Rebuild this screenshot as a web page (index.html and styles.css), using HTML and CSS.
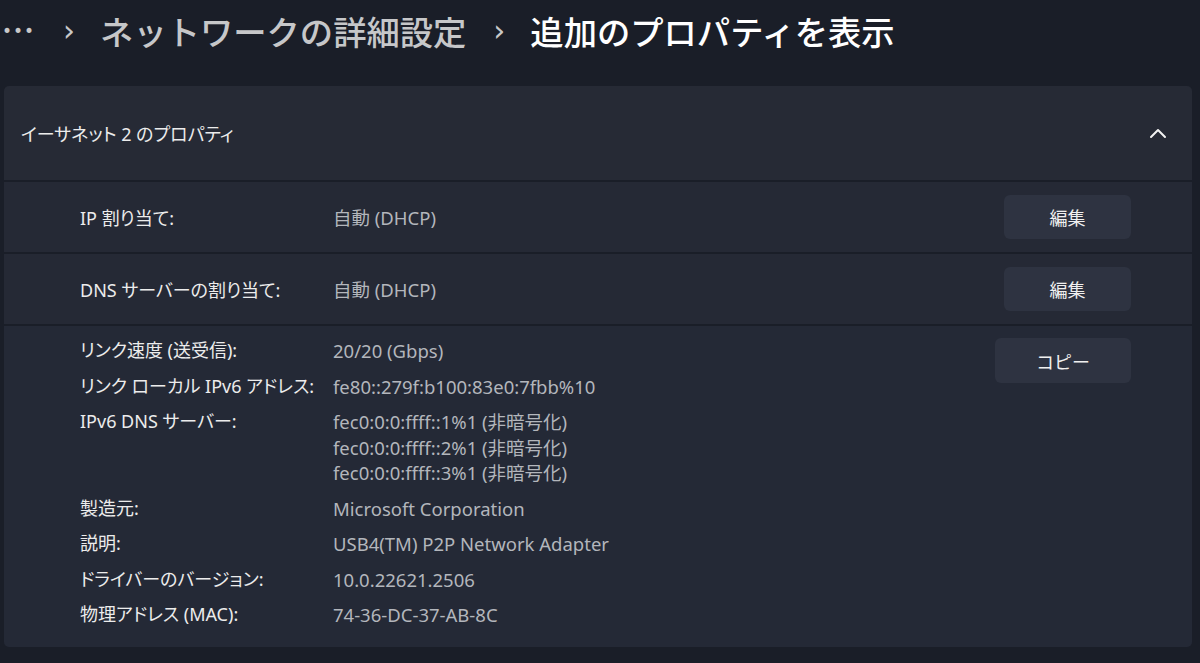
FILE: index.html
```html
<!DOCTYPE html>
<html lang="ja">
<head>
<meta charset="utf-8">
<title>追加のプロパティを表示</title>
<link rel="stylesheet" href="styles.css">
</head>
<body>
<header class="breadcrumb">
  <span class="crumb-more">•••</span>
  <span class="crumb-sep">›</span>
  <span class="crumb-parent">ネットワークの詳細設定</span>
  <span class="crumb-sep">›</span>
  <span class="crumb-current">追加のプロパティを表示</span>
</header>
<section class="panel">
  <div class="panel-header">
    <span class="panel-title">イーサネット 2 のプロパティ</span>
    <svg class="chevron" width="18" height="12" viewBox="0 0 18 12"><path d="M2 10 L9 3 L16 10" fill="none" stroke="#f2f2f2" stroke-width="2" stroke-linecap="round" stroke-linejoin="round"/></svg>
  </div>
  <div class="row">
    <span class="label">IP 割り当て:</span>
    <span class="value">自動 (DHCP)</span>
    <button class="btn btn-edit">編集</button>
  </div>
  <div class="row">
    <span class="label">DNS サーバーの割り当て:</span>
    <span class="value">自動 (DHCP)</span>
    <button class="btn btn-edit">編集</button>
  </div>
  <div class="row-details">
    <dl class="details">
      <dt>リンク速度 (送受信):</dt><dd>20/20 (Gbps)</dd>
      <dt>リンク ローカル IPv6 アドレス:</dt><dd>fe80::279f:b100:83e0:7fbb%10</dd>
      <dt>IPv6 DNS サーバー:</dt><dd>fec0:0:0:ffff::1%1 (非暗号化)<br>fec0:0:0:ffff::2%1 (非暗号化)<br>fec0:0:0:ffff::3%1 (非暗号化)</dd>
      <dt>製造元:</dt><dd>Microsoft Corporation</dd>
      <dt>説明:</dt><dd>USB4(TM) P2P Network Adapter</dd>
      <dt>ドライバーのバージョン:</dt><dd>10.0.22621.2506</dd>
      <dt>物理アドレス (MAC):</dt><dd>74-36-DC-37-AB-8C</dd>
    </dl>
    <button class="btn btn-copy">コピー</button>
  </div>
</section>
</body>
</html>
```

FILE: styles.css
```css
html, body {
  margin: 0;
  padding: 0;
}
body {
  background: #1a1e28;
  color: #e6e6e6;
  font-family: "Noto Sans", "Noto Sans CJK JP", sans-serif;
  font-feature-settings: "palt";
  width: 1200px;
  height: 663px;
  overflow: hidden;
}
.breadcrumb {
  display: flex;
  align-items: center;
  height: 62px;
  padding-left: 2px;
  font-family: "Noto Sans CJK JP", sans-serif;
  font-feature-settings: normal;
  font-size: 33.3px;
  font-weight: 500;
  line-height: 1;
}
.crumb-more {
  font-family: "DejaVu Sans", sans-serif;
  font-size: 17px;
  letter-spacing: 1px;
  color: #c8c8c8;
  margin-right: 28px;
}
.crumb-sep {
  font-size: 30px;
  color: #c8c8c8;
  margin-right: 25px;
  font-family: "DejaVu Sans", sans-serif;
  font-weight: 400;
}
.crumb-parent {
  color: #c6c7c9;
  margin-right: 27px;
}
.crumb-current {
  color: #ffffff;
}
.panel {
  margin: 24px 8px 0 4px;
  display: flex;
  flex-direction: column;
  gap: 2px;
}
.panel-header {
  height: 94px;
  background: #262a35;
  border-radius: 5px 5px 0 0;
  display: flex;
  align-items: center;
  justify-content: space-between;
  padding: 0 25px 0 17px;
}
.panel-title {
  font-size: 18px;
  color: #ececec;
}
.chevron {
  display: block;
}
.row {
  height: 70px;
  background: #252935;
  display: flex;
  align-items: center;
  padding: 0 61px 0 76px;
  font-size: 18px;
}
.label {
  width: 253px;
  color: #ececec;
}
.value {
  flex: 1;
  color: #b3b6bc;
  font-size: 18.5px;
}
.btn {
  font-family: "Noto Sans CJK JP", sans-serif;
  font-size: 18px;
  color: #f0f0f0;
  background: #2e3341;
  border: none;
  border-radius: 6px;
  height: 44px;
  padding: 0;
}
.btn-edit {
  width: 127px;
}
.btn-copy {
  width: 136px;
  height: 45px;
  margin-top: 0;
}
.row-details {
  background: #242936;
  border-radius: 0 0 5px 5px;
  display: flex;
  align-items: flex-start;
  padding: 12px 61px 20px 76px;
  height: 321px;
  box-sizing: border-box;
}
.details {
  flex: 1;
  margin: 0;
  display: grid;
  grid-template-columns: 253px 1fr;
  row-gap: 10px;
  font-size: 18px;
  line-height: 25.5px;
}
.details dt {
  color: #ececec;
}
.details dd {
  margin: 0;
  color: #b3b6bc;
  font-size: 18.5px;
}
```
